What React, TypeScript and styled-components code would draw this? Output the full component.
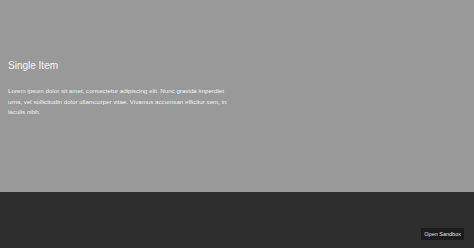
import React from "react";
import styled, { createGlobalStyle } from "styled-components";

const GlobalStyle = createGlobalStyle`
  html, body {
    margin: 0;
    padding: 0;
    height: 100%;
    background: #2e2e2e;
    font-family: "Liberation Sans", Arial, sans-serif;
  }
  #root {
    height: 100%;
  }
`;

const Page = styled.div`
  display: flex;
  flex-direction: column;
  height: 248px;
`;

const Stage = styled.section`
  height: 192px;
  background: #999999;
  padding: 60px 8px 0;
  box-sizing: border-box;
`;

const Title = styled.h2`
  margin: 0;
  font-size: 10px;
  line-height: 12px;
  font-weight: 400;
  color: #f7f7f7;
`;

const Text = styled.p`
  margin: 14px 0 0;
  width: 225px;
  font-size: 6.2px;
  line-height: 10.5px;
  color: #f2f2f2;
`;

const Footer = styled.footer`
  flex: 1;
  display: flex;
  justify-content: flex-end;
  align-items: flex-end;
  padding: 0 10px 8px;
  background: #2e2e2e;
`;

const SandboxButton = styled.a`
  display: flex;
  align-items: center;
  height: 12px;
  padding: 0 3px;
  background: #1b1b1b;
  color: #e6e6e6;
  font-size: 5.5px;
  text-decoration: none;
  border-radius: 1px;
`;

export default function App() {
  return (
    <>
      <GlobalStyle />
      <Page>
        <Stage>
          <Title>Single Item</Title>
          <Text>
            Lorem ipsum dolor sit amet, consectetur adipiscing elit. Nunc
            gravida imperdiet urna, vel sollicitudin dolor ullamcorper vitae.
            Vivamus accumsan efficitur sem, in iaculis nibh.
          </Text>
        </Stage>
        <Footer>
          <SandboxButton href="#">Open Sandbox</SandboxButton>
        </Footer>
      </Page>
    </>
  );
}
